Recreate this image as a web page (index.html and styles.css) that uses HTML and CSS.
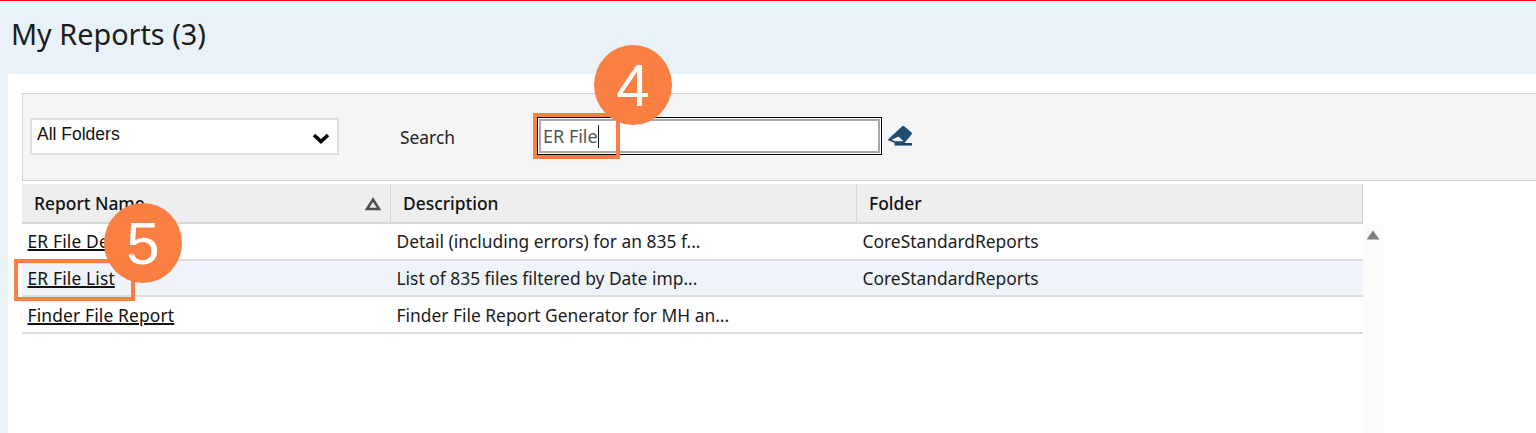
FILE: index.html
```html
<!DOCTYPE html>
<html lang="en">
<head>
<meta charset="utf-8">
<title>My Reports</title>
<link rel="stylesheet" href="styles.css">
</head>
<body>
<div class="page">
  <h1 class="title">My Reports (3)</h1>
  <main class="panel">
    <div class="filters">
      <div class="select">
        <span class="select-text">All Folders</span>
        <svg class="chevron" width="18" height="12" viewBox="0 0 18 12"><path d="M2 3 L9 9.5 L16 3" fill="none" stroke="#000" stroke-width="3.6"/></svg>
      </div>
      <span class="search-label">Search</span>
      <div class="search-input"><span class="search-text">ER File</span><span class="caret"></span></div>
      <svg class="eraser" width="24" height="21" viewBox="0 0 24 21"><path d="M14.5 0 Q15.5 -0.3 16.5 0.5 L23.5 6.5 Q24.3 7.5 23.5 8.5 L16.5 17 L7 17 L0.5 14.5 Q-0.3 13.7 0.5 13 Z" fill="#1f4b6e"/><path d="M3.5 13.7 L10.5 10.5 L15.5 15.3 L7 15.3 Z" fill="#f5f5f5"/><rect x="6.5" y="17" width="17.5" height="2.6" fill="#1f4b6e"/></svg>
    </div>
    <div class="grid-row">
      <div class="grid">
        <div class="row head">
          <div class="cell name">Report Name
            <svg class="sort" width="16" height="14" viewBox="0 0 16 14"><path d="M8 2.5 L14 12 L2 12 Z" fill="none" stroke="#4d4d4d" stroke-width="2.5"/></svg>
          </div>
          <div class="cell desc">Description</div>
          <div class="cell folder">Folder</div>
        </div>
        <div class="row">
          <div class="cell name"><a href="#">ER File Detail</a></div>
          <div class="cell desc">Detail (including errors) for an 835 f...</div>
          <div class="cell folder">CoreStandardReports</div>
        </div>
        <div class="row alt">
          <div class="cell name"><a href="#">ER File List</a></div>
          <div class="cell desc">List of 835 files filtered by Date imp...</div>
          <div class="cell folder">CoreStandardReports</div>
        </div>
        <div class="row">
          <div class="cell name"><a href="#">Finder File Report</a></div>
          <div class="cell desc">Finder File Report Generator for MH an...</div>
          <div class="cell folder"></div>
        </div>
      </div>
      <div class="scrollbar">
        <svg width="14" height="10" viewBox="0 0 14 10"><path d="M7 0.5 L13.5 9.5 L0.5 9.5 Z" fill="#808080"/></svg>
      </div>
    </div>
  </main>
</div>
<div class="callout-box box-4"></div>
<div class="callout-box box-5"></div>
<div class="badge badge-4">4</div>
<div class="badge badge-5">5</div>
</body>
</html>
```
FILE: styles.css
```css
* { box-sizing: border-box; }
html, body { margin: 0; height: 433px; overflow: hidden; }
body {
  background: #e9f1f9;
  font-family: "Noto Sans", "Open Sans", sans-serif;
  color: #1a1a1a;
  position: relative;
}
.page { border-top: 1px solid #ff0000; height: 433px; display: flex; flex-direction: column; }
.title {
  margin: 0;
  height: 73px;
  padding: 14px 0 0 11px;
  font-size: 28.8px;
  line-height: 38px;
  font-weight: 400;
  color: #1c1c1c;
}
.panel { flex: 1; margin-left: 8px; background: #fff; padding: 19px 0 0 14px; }
.filters {
  height: 88px;
  background: #f5f5f5;
  border: 1px solid #d3d3d3;
  border-right: 0;
  display: flex;
  align-items: center;
  padding-left: 7px;
}
.select {
  width: 309px;
  height: 37px;
  background: #fff;
  border: 2px solid #dedede;
  display: flex;
  justify-content: space-between;
  padding: 4px 7px 0 5px;
  margin-top: -1px;
}
.select-text { font-family: "Liberation Sans", Arial, sans-serif; font-size: 17.5px; line-height: 21px; color: #111; }
.chevron { margin-top: 8px; }
.search-label { margin-left: 61px; width: 137px; font-size: 17.4px; color: #222; margin-top: -1px; }
.search-input {
  width: 345px;
  height: 38px;
  background: #fff;
  border: 1px solid #000;
  box-shadow: inset 0 0 0 1px #fff, inset 0 0 0 3px #a9a9a9;
  display: flex;
  align-items: center;
  padding-left: 5px;
  margin-top: -2px;
}
.search-text { font-size: 18px; color: #555; }
.caret { width: 1px; height: 23px; background: #111; }
.eraser { margin-left: 6px; margin-top: -2px; }
.grid-row { display: flex; margin-top: 3px; }
.grid { width: 1341px; }
.row { display: flex; height: 36.7px; border-bottom: 2px solid #dcdcdc; font-size: 17.4px; }
.row.alt { background: #eef4f9; }
.row.head { height: 40px; background: #eeeeee; font-weight: 500; border-bottom-color: #d6d6d6; border-right: 1px solid #d6d6d6; }
.cell { display: flex; align-items: center; white-space: nowrap; padding-left: 5.5px; color: #1c1c1c; }
.name { width: 369px; }
.desc { width: 466px; font-size: 17.4px; }
.folder { flex: 1; }
.head .cell { color: #111; padding-left: 12px; justify-content: flex-start; }
.head .name, .head .desc { border-right: 1px solid #d6d6d6; }
.head .name { justify-content: space-between; padding-right: 9px; }
.sort { margin-top: 1px; }
.cell a { color: #111; text-decoration: underline; text-decoration-thickness: 1.5px; letter-spacing: 0.15px; }
.scrollbar { width: 20px; margin-top: 40px; height: 209px; background: #fbfbfb; display: flex; justify-content: center; align-items: flex-start; padding-top: 6px; }
.callout-box { position: absolute; border: 4px solid #f97f43; }
.box-4 { left: 533px; top: 113px; width: 87px; height: 46px; }
.box-5 { left: 14px; top: 259px; width: 121px; height: 42px; }
.badge {
  position: absolute;
  width: 78px;
  height: 80px;
  border-radius: 50%;
  background: #f97f43;
  color: #fff;
  font-family: "Liberation Sans", Arial, sans-serif;
  font-size: 60px;
  line-height: 82px;
  text-align: center;
}
.badge-4 { left: 594px; top: 45px; }
.badge-5 { left: 104px; top: 203px; }
```
